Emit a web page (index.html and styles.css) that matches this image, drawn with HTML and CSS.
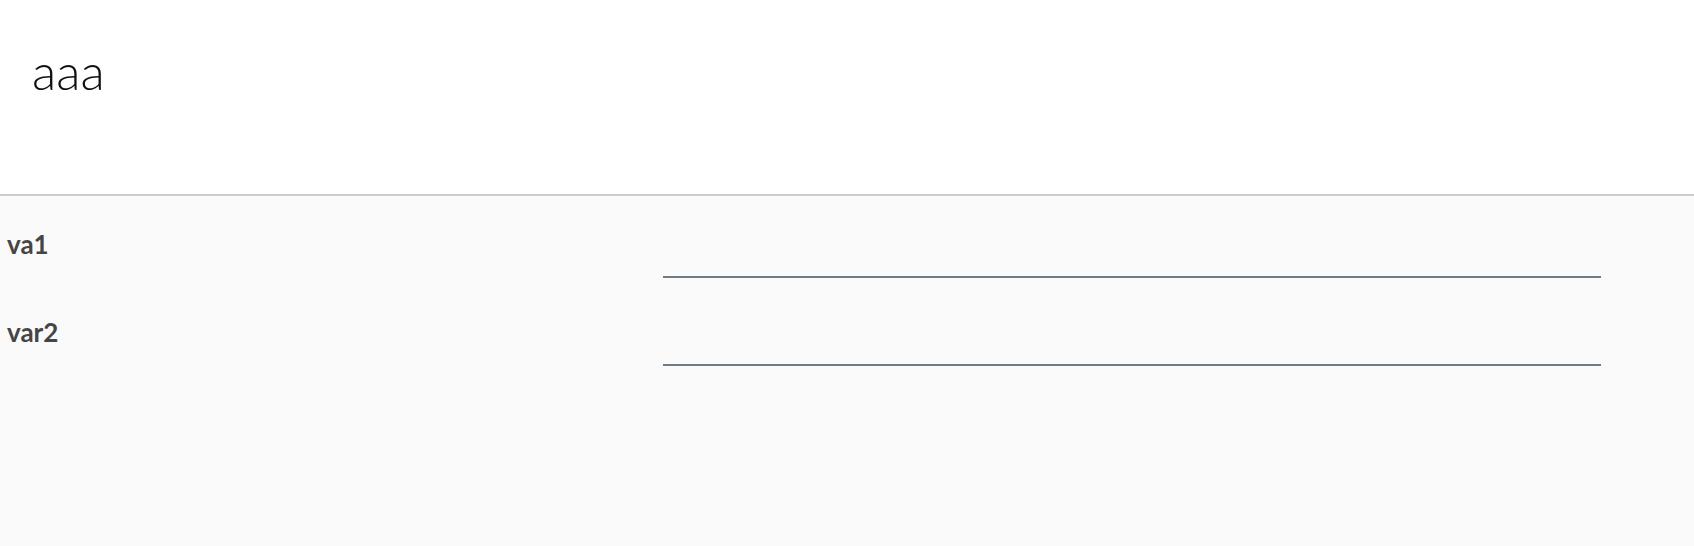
FILE: index.html
```html
<!DOCTYPE html>
<html lang="en">

<head>
    <meta charset="UTF-8">
    <meta name="viewport" content="width=device-width, initial-scale=1.0">
    <title>aaa</title>
    <link rel="stylesheet" href="styles.css">
</head>

<body>
    <header class="top">
        <h1 class="title">aaa</h1>
    </header>

    <!-- variables -->
    <form class="vars">
        <div class="row">
            <label class="name" for="va1">va1</label>
            <input class="field" id="va1" type="text">
        </div>
        <div class="row">
            <label class="name" for="var2">var2</label>
            <input class="field" id="var2" type="text">
        </div>
    </form>
</body>

</html>
```

FILE: styles.css
```css
html,
body {
    margin: 0;
    height: 100%;
}

body {
    background-color: #fafafa;
    font-family: Lato, "Noto Sans", sans-serif;
}

.top {
    height: 196px;
    box-sizing: border-box;
    padding: 41px 0 0 32px;
    background-color: #fff;
    border-bottom: 2px solid #cccccc;
}

.title {
    margin: 0;
    font-size: 50px;
    line-height: 60px;
    font-weight: 300;
    color: #111;
}

.vars {
    padding: 32px 0 0 7px;
}

.row {
    display: flex;
    align-items: flex-start;
    height: 88px;
}

.name {
    width: 656px;
    font-size: 26px;
    line-height: 32px;
    font-weight: 700;
    color: #454545;
}

.field {
    width: 938px;
    height: 50px;
    box-sizing: border-box;
    padding: 0;
    border: none;
    border-bottom: 2px solid #6f7b84;
    background: transparent;
    outline: none;
}
```
